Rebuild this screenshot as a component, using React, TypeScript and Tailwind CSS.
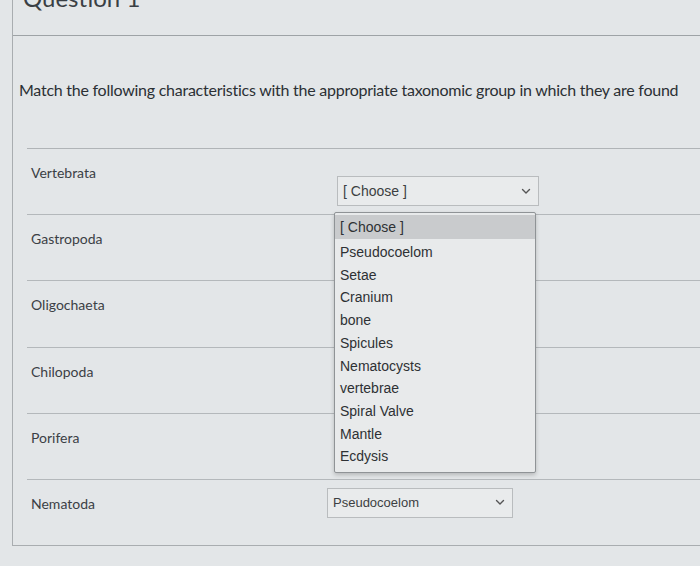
import React from "react";

const rows = ["Vertebrata", "Gastropoda", "Oligochaeta", "Chilopoda", "Porifera", "Nematoda"];

const options = [
  "[ Choose ]",
  "Pseudocoelom",
  "Setae",
  "Cranium",
  "bone",
  "Spicules",
  "Nematocysts",
  "vertebrae",
  "Spiral Valve",
  "Mantle",
  "Ecdysis",
];

function Chevron() {
  return (
    <svg width="10" height="7" viewBox="0 0 10 7" className="shrink-0">
      <path d="M1.5 1.5 L5 5 L8.5 1.5" fill="none" stroke="#555" strokeWidth="1.4" strokeLinecap="round" strokeLinejoin="round" />
    </svg>
  );
}

function Select({ value, className }: { value: string; className: string }) {
  return (
    <div
      className={`flex items-center justify-between border border-[#b9bcbe] bg-[#e9ebec] pl-[5px] pr-[7px] font-['Liberation_Sans',sans-serif] text-[#3c3f42] ${className}`}
    >
      <span>{value}</span>
      <Chevron />
    </div>
  );
}

export default function App() {
  return (
    <div className="relative h-[566px] w-[700px] overflow-hidden bg-[#e3e6e8] font-['Lato',sans-serif] text-[#2f3438]">
      <div className="ml-[12px] flex h-[546px] flex-col border-b border-l border-[#a9adb0]">
        <div className="h-[36px] border-b border-[#9ea3a6] pl-[10px]">
          <div className="-mt-[16px] text-[24px] leading-[28px] text-[#3a3f44]">Question 1</div>
        </div>
        <p className="pl-[6px] pt-[44px] text-[16px] leading-[20px] tracking-[-0.25px] text-[#2b3034]">
          Match the following characteristics with the appropriate taxonomic group in which they are found
        </p>
        <div className="ml-[14px] mt-[48px] flex flex-1 flex-col border-t border-[#b0b4b7]">
          {rows.map((r, i) => (
            <div
              key={r}
              className={`flex flex-1 items-start ${i < rows.length - 1 ? "border-b border-[#b4b8bb]" : ""}`}
            >
              <div className="w-[300px] pl-[4px] pt-[15px] text-[14px] leading-[18px] text-[#3b4045]">{r}</div>
              {i === 0 && (
                <Select value="[ Choose ]" className="ml-[10px] mt-[27px] h-[30px] w-[202px] text-[14px]" />
              )}
              {i === rows.length - 1 && (
                <Select value="Pseudocoelom" className="mt-[8px] h-[30px] w-[186px] text-[13px]" />
              )}
            </div>
          ))}
        </div>
      </div>

      <div className="absolute left-[334px] top-[212px] w-[202px] rounded-[2px] border border-[#8f9396] bg-[#e8eaeb] pb-[4px] font-['Liberation_Sans',sans-serif] text-[14px] leading-[22.7px] text-[#2e3134] shadow-[0_2px_4px_rgba(0,0,0,0.2)]">
        {options.map((o, i) => (
          <div key={o} className={`pl-[5px] ${i === 0 ? "my-[2px] bg-[#c9cbcd] leading-[24px]" : ""}`}>
            {o}
          </div>
        ))}
      </div>
    </div>
  );
}
